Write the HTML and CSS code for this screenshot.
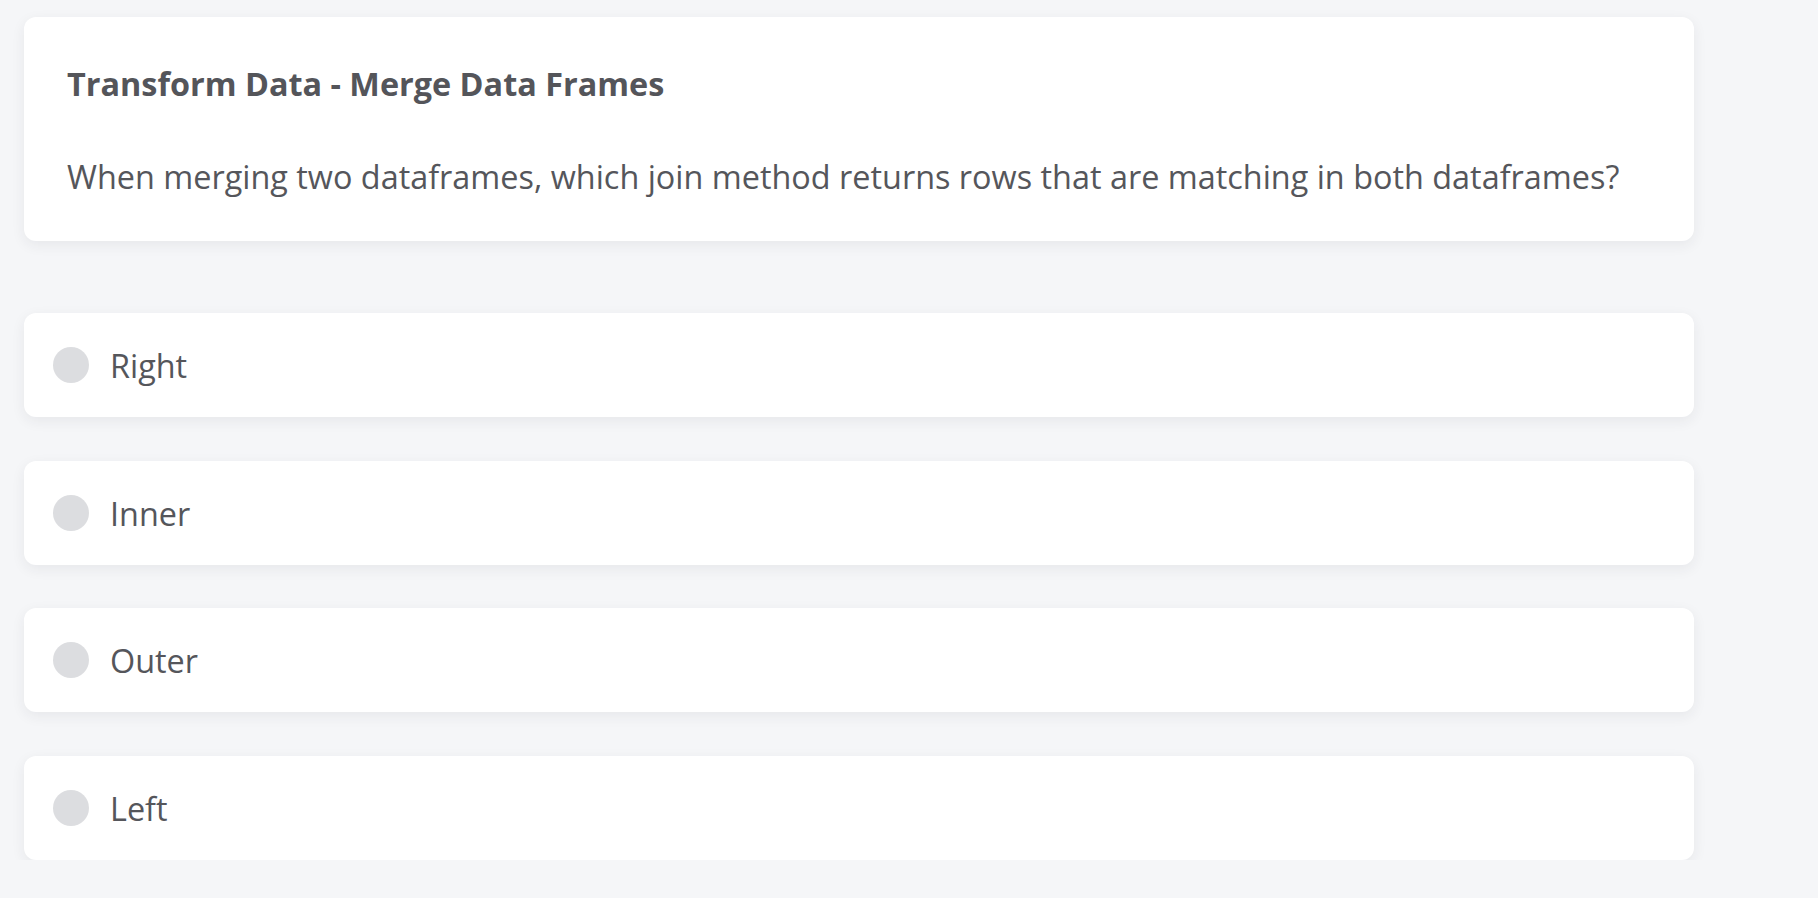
FILE: index.html
```html
<!DOCTYPE html>
<html lang="en">
<head>
<meta charset="utf-8">
<title>Transform Data - Merge Data Frames</title>
<link rel="stylesheet" href="styles.css">
</head>
<body>
<main class="quiz">
  <section class="question-card">
    <h1 class="question-title">Transform Data - Merge Data Frames</h1>
    <p class="question-text">When merging two dataframes, which join method returns rows that are matching in both dataframes?</p>
  </section>
  <ul class="options">
    <li class="option"><span class="radio"></span><span class="option-label">Right</span></li>
    <li class="option"><span class="radio"></span><span class="option-label">Inner</span></li>
    <li class="option"><span class="radio"></span><span class="option-label">Outer</span></li>
    <li class="option"><span class="radio"></span><span class="option-label">Left</span></li>
  </ul>
</main>
</body>
</html>
```

FILE: styles.css
```css
html, body {
  margin: 0;
  padding: 0;
  background: #f5f6f8;
}

body {
  font-family: "Open Sans", "Noto Sans", "Liberation Sans", sans-serif;
  color: #55565b;
}

.quiz {
  width: 1670px;
  padding: 17px 0 0 24px;
  display: flex;
  flex-direction: column;
}

.question-card {
  background: #ffffff;
  border-radius: 12px;
  box-shadow: 0 4px 14px rgba(40, 45, 60, 0.07);
  padding: 46px 44px 44px 43px;
}

.question-title {
  margin: 0;
  font-size: 32.4px;
  font-weight: 700;
  line-height: 41px;
  color: #54555a;
}

.question-text {
  margin: 52px 0 0 0;
  font-size: 32.4px;
  font-weight: 400;
  line-height: 41px;
}

.options {
  list-style: none;
  margin: 72px 0 0 0;
  padding: 0;
  display: flex;
  flex-direction: column;
  gap: 43.5px;
}

.option {
  height: 104px;
  background: #ffffff;
  border-radius: 12px;
  box-shadow: 0 4px 14px rgba(40, 45, 60, 0.07);
  display: flex;
  align-items: center;
  padding: 0 0 0 29px;
  gap: 21px;
}

.radio {
  width: 36px;
  height: 36px;
  border-radius: 50%;
  background: #dcdde0;
  flex: none;
}

.option-label {
  font-size: 32.4px;
  line-height: 41px;
  padding-top: 1px;
}
```
